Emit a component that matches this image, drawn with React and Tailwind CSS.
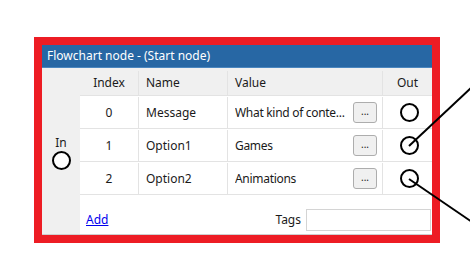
const rows = [
  { index: 0, name: "Message", value: "What kind of conte..." },
  { index: 1, name: "Option1", value: "Games" },
  { index: 2, name: "Option2", value: "Animations" },
];

function Port() {
  return <div className="h-[19px] w-[19px] rounded-full border-2 border-black bg-white" />;
}

export default function App() {
  return (
    <div
      className="relative h-[272px] w-[470px] bg-white pl-[34px] pt-[37px] text-[12px] text-[#1a1a1a]"
      style={{ fontFamily: '"Noto Sans", "Open Sans", sans-serif' }}
    >
      <div className="flex h-[206px] w-[406px] flex-col border-8 border-[#ed1c24] bg-white">
        <div className="flex h-[23px] items-center border-b border-[#4a86bf] bg-[#2767a4] px-[5px] text-white">
          Flowchart node - (Start node)
        </div>
        <div className="flex flex-1 border-b border-[#cfcfcf]">
          <div className="flex w-[38px] flex-col items-center justify-center gap-[2px] bg-[#f0f0f0] pt-[4px]">
            <span className="leading-none">In</span>
            <Port />
          </div>
          <div className="flex flex-1 flex-col">
            <div className="flex h-[28px] items-center border-b border-[#e3e3e3] bg-[#f0f0f0] pt-[3px]">
              <div className="w-[58px] text-center">Index</div>
              <div className="flex h-full w-[89px] items-center border-l border-[#e3e3e3] pl-[7px]">Name</div>
              <div className="flex h-full w-[155px] items-center border-l border-[#e3e3e3] pl-[7px]">Value</div>
              <div className="flex h-full w-[50px] items-center justify-center border-l border-[#e3e3e3]">Out</div>
            </div>
            {rows.map((r) => (
              <div key={r.index} className="flex h-[33px] items-center border-b border-[#e3e3e3] pt-[1px]">
                <div className="w-[58px] text-center">{r.index}</div>
                <div className="flex h-full w-[89px] items-center border-l border-[#e3e3e3] pl-[7px]">{r.name}</div>
                <div className="flex h-full w-[155px] items-center gap-[2px] border-l border-[#e3e3e3] pl-[7px] pr-[5px]">
                  <span className="min-w-0 flex-1 overflow-hidden whitespace-nowrap tracking-[-0.3px]">{r.value}</span>
                  <button className="flex h-[21px] w-[24px] shrink-0 items-center justify-center rounded-[3px] border border-[#adadad] bg-[#f0f0f0] pb-[4px] text-[10px] leading-none">
                    ...
                  </button>
                </div>
                <div className="flex h-full w-[50px] items-center justify-center border-l border-[#e3e3e3] pl-[3px]">
                  <Port />
                </div>
              </div>
            ))}
            <div className="flex flex-1 items-end justify-between pb-[3px] pl-[6px] pr-[1px]">
              <a href="#" className="mb-[2px] text-[#0000ee] underline">Add</a>
              <div className="flex items-center gap-[5px]">
                <span>Tags</span>
                <input className="h-[22px] w-[125px] border border-[#d4d4d4] bg-white outline-none" />
              </div>
            </div>
          </div>
        </div>
      </div>
      <svg className="pointer-events-none absolute left-0 top-0" width="470" height="272">
        <line x1="409" y1="146" x2="472" y2="87" stroke="black" strokeWidth="2" />
        <line x1="409" y1="179" x2="472" y2="222" stroke="black" strokeWidth="2" />
      </svg>
    </div>
  );
}
